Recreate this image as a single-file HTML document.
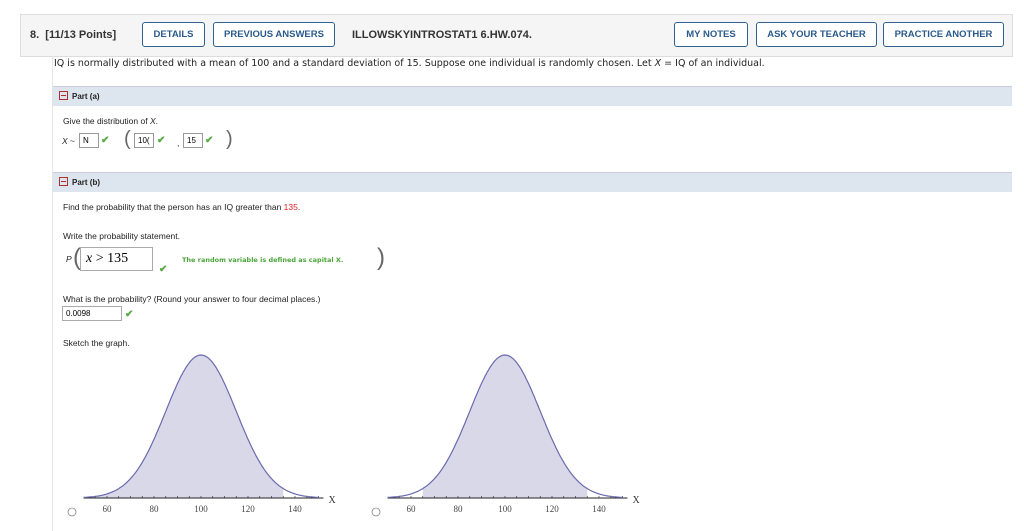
<!DOCTYPE html>
<html><head><meta charset="utf-8"><style>
body{margin:0;width:1024px;height:531px;background:#fff;font-family:"Liberation Sans",Arial,sans-serif;position:relative;overflow:hidden}
.a{position:absolute}
.hdr{left:20px;top:14px;width:991px;height:41px;background:#f5f5f5;border:1px solid #ddd}
.btn{position:absolute;top:22px;height:25px;border:1px solid #2f6192;border-radius:3px;background:#fff;color:#2a5a8c;font-size:9.5px;font-weight:bold;line-height:24px;text-align:center;box-sizing:border-box}
.lb{left:52px;top:56px;width:1px;height:475px;background:#e5e5e5}
.bar{left:53px;width:959px;height:19px;background:#dde5ee;border-top:1px solid #ccd;font-size:8px;font-weight:bold;line-height:19px;color:#222}
.mi{display:inline-block;width:7px;height:7px;border:1px solid #b03030;margin:0 4px 0 6px;position:relative;top:1px}
.mi:after{content:"";position:absolute;left:1px;top:3px;width:5px;height:1px;background:#b03030}
.t{font-size:8.5px;color:#222}
.box{position:absolute;border:1px solid #999;background:#fff;font-size:8px;line-height:13px;padding-left:3px;box-sizing:border-box}
.ck{position:absolute;color:#5aa845;font-size:10px;font-weight:bold}
</style></head><body>
<div class="a hdr"></div>
<div class="a" style="left:30px;top:29px;font-size:11px;font-weight:bold;color:#333">8.&nbsp; [11/13 Points]</div>
<div class="btn" style="left:142px;width:63px">DETAILS</div>
<div class="btn" style="left:213px;width:122px">PREVIOUS ANSWERS</div>
<div class="a" style="left:352px;top:29px;font-size:11px;font-weight:bold;color:#333">ILLOWSKYINTROSTAT1 6.HW.074.</div>
<div class="btn" style="left:674px;width:74px">MY NOTES</div>
<div class="btn" style="left:756px;width:121px">ASK YOUR TEACHER</div>
<div class="btn" style="left:883px;width:121px">PRACTICE ANOTHER</div>
<div class="a lb"></div>
<div class="a" style="left:54px;top:58px;font-family:'DejaVu Sans',sans-serif;font-size:9.5px;color:#222">IQ is normally distributed with a mean of 100 and a standard deviation of 15. Suppose one individual is randomly chosen. Let <i>X</i> = IQ of an individual.</div>
<div class="a bar" style="top:86px"><span class="mi"></span>Part (a)</div>
<div class="a t" style="left:63px;top:116px">Give the distribution of <i>X</i>.</div>
<div class="a t" style="left:62px;top:136px"><i>X</i> ~</div>
<div class="box" style="left:79px;top:133px;width:20px;height:15px">N</div>
<div class="ck" style="left:101px;top:135px">✔</div>
<div class="a" style="left:124px;top:128px;font-size:20px;color:#666;font-weight:lighter">(</div>
<div class="box" style="left:134px;top:133px;width:20px;height:15px">10(</div>
<div class="ck" style="left:157px;top:135px">✔</div>
<div class="a t" style="left:177px;top:138px">,</div>
<div class="box" style="left:183px;top:133px;width:20px;height:15px">15</div>
<div class="ck" style="left:205px;top:135px">✔</div>
<div class="a" style="left:226px;top:128px;font-size:20px;color:#666">)</div>
<div class="a bar" style="top:172px"><span class="mi"></span>Part (b)</div>
<div class="a t" style="left:63px;top:202px">Find the probability that the person has an IQ greater than <span style="color:#d22">135</span>.</div>
<div class="a t" style="left:63px;top:231px">Write the probability statement.</div>
<div class="a t" style="left:66px;top:254px"><i>P</i></div>
<div class="a" style="left:73px;top:244px;font-size:24px;color:#666">(</div>
<div class="box" style="left:80px;top:247px;width:73px;height:24px;border-color:#aaa;font-family:'Liberation Serif',serif;font-size:14px;line-height:22px;padding-left:5px"><i>x</i> &gt; 135</div>
<div class="ck" style="left:159px;top:264px">✔</div>
<div class="a" style="left:182px;top:256px;font-family:'DejaVu Sans',sans-serif;font-size:6.5px;font-weight:bold;color:#4aa63a">The random variable is defined as capital X.</div>
<div class="a" style="left:377px;top:244px;font-size:24px;color:#666">)</div>
<div class="a t" style="left:63px;top:294px">What is the probability? (Round your answer to four decimal places.)</div>
<div class="box" style="left:62px;top:306px;width:60px;height:15px;border-color:#aaa">0.0098</div>
<div class="ck" style="left:125px;top:309px">✔</div>
<div class="a t" style="left:63px;top:338px">Sketch the graph.</div>
<svg class="a" style="left:0;top:0" width="1024" height="531" id="g"></svg>
<script>
var s='';
function g(off,lo){
 var px=function(v){return 201+off+(v-100)*2.35},py=function(v){return 498-143*Math.exp(-Math.pow((v-100)/15,2)/2)};
 var d='',f='M'+px(lo)+',498';
 for(var v=50;v<=150;v+=0.5){d+=(v==50?'M':'L')+px(v).toFixed(1)+','+py(v).toFixed(1);if(v>=lo&&v<=135)f+='L'+px(v).toFixed(1)+','+py(v).toFixed(1);}
 f+='L'+px(135)+',498Z';
 s+='<path d="'+f+'" fill="#d8d8e8"/>';
 s+='<line x1="'+px(50)+'" y1="498" x2="'+(px(150)+5)+'" y2="498" stroke="#222" stroke-width="1"/>';
 for(var t=55;t<=150;t+=5)s+='<line x1="'+px(t)+'" y1="496" x2="'+px(t)+'" y2="498" stroke="#222" stroke-width="0.6"/>';
 s+='<path d="'+d+'" fill="none" stroke="#6a6aae" stroke-width="1.2"/>';
 [60,80,100,120,140].forEach(function(t){s+='<text x="'+px(t)+'" y="512" font-family="Liberation Serif,serif" font-size="9" fill="#444" text-anchor="middle">'+t+'</text>'});
 s+='<text x="'+(px(150)+10)+'" y="503" font-family="Liberation Serif,serif" font-size="10" fill="#333">X</text>';
 s+='<circle cx="'+(72+off)+'" cy="512" r="4" fill="#fff" stroke="#888" stroke-width="0.8"/>';
}
g(0,50);g(304,65);
document.getElementById('g').innerHTML=s;
</script>
</body></html>
